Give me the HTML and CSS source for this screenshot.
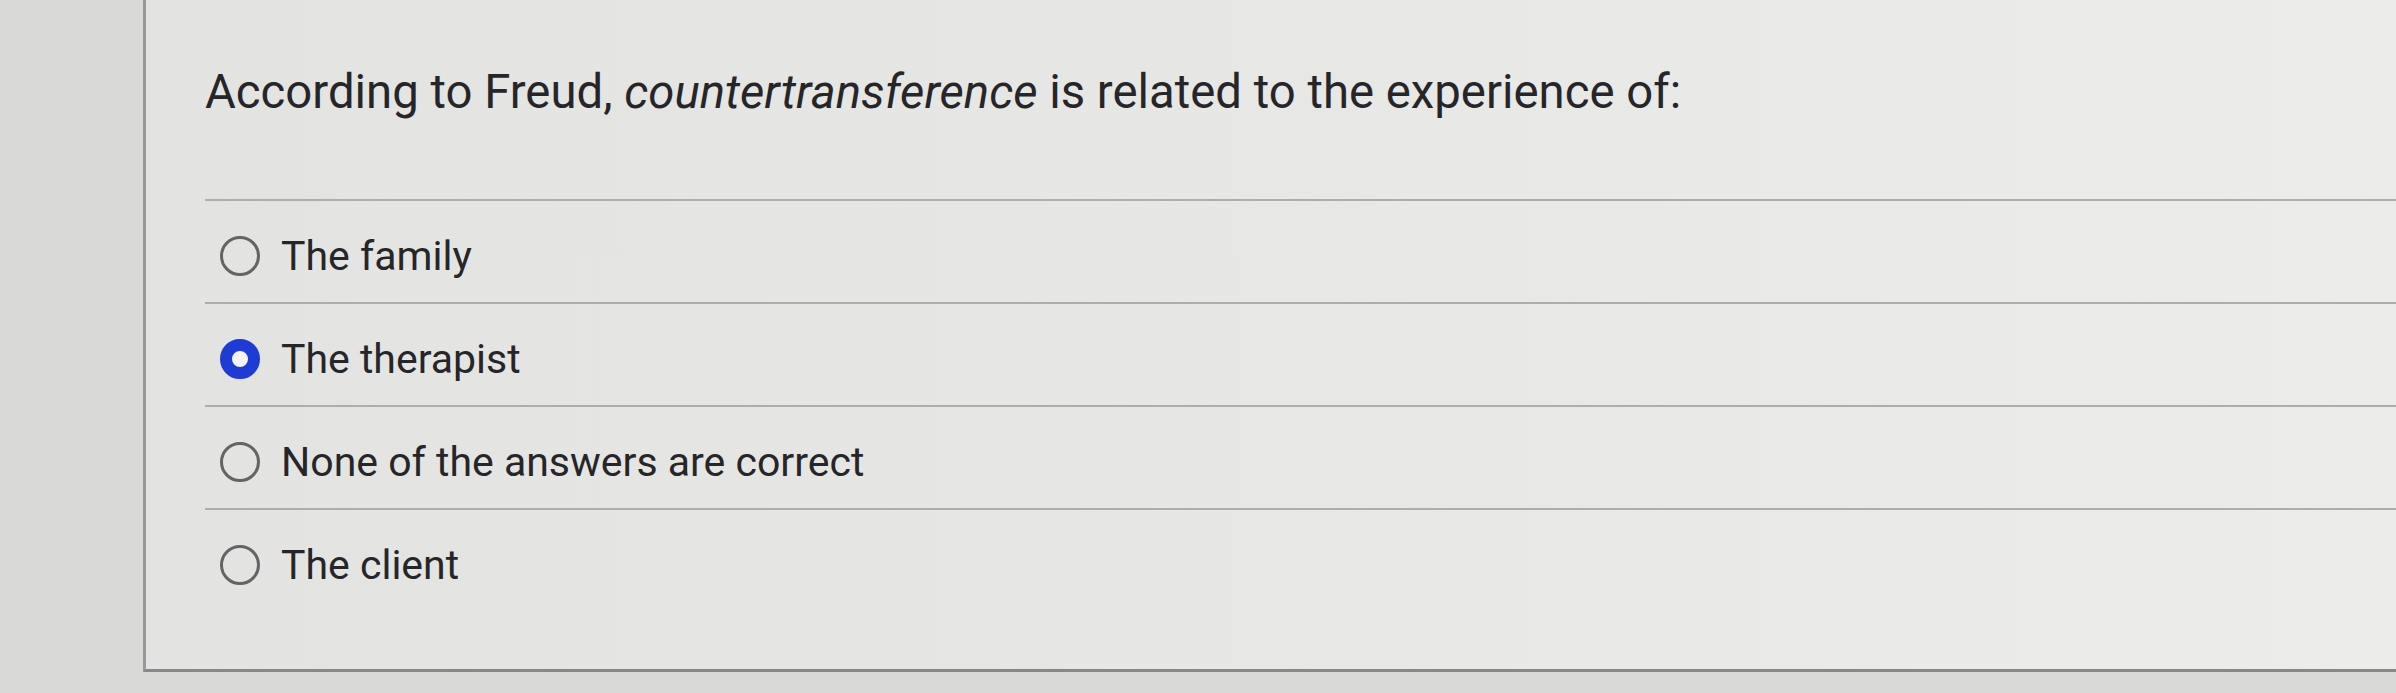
FILE: index.html
```html
<!DOCTYPE html>
<html lang="en">
<head>
<meta charset="utf-8">
<title>Question</title>
<link rel="stylesheet" href="styles.css">
</head>
<body>
  <main class="card">
    <p class="question">According to Freud, <em>countertransference</em> is related to the experience of:</p>
    <ul class="options">
      <li class="option"><span class="radio"></span><span class="label">The family</span></li>
      <li class="option"><span class="radio radio-checked"></span><span class="label">The therapist</span></li>
      <li class="option"><span class="radio"></span><span class="label">None of the answers are correct</span></li>
      <li class="option"><span class="radio"></span><span class="label">The client</span></li>
    </ul>
  </main>
</body>
</html>
```

FILE: styles.css
```css
html, body {
  margin: 0;
  padding: 0;
}
body {
  background: #d9d9d8;
  font-family: Roboto, "Liberation Sans", sans-serif;
  color: #26262a;
  width: 2396px;
  height: 693px;
  overflow: hidden;
}
.card {
  margin-left: 143px;
  height: 672px;
  box-sizing: border-box;
  background: linear-gradient(90deg, #e3e3e1 0%, #e7e7e5 50%, #ececeb 100%);
  border-left: 3px solid #98989b;
  border-bottom: 3px solid #88888b;
  padding: 0 0 0 59px;
}
.question {
  margin: 0;
  padding-top: 62px;
  font-size: 47.3px;
  line-height: 60px;
  height: 199px;
  box-sizing: border-box;
}
.question em {
  font-style: italic;
}
.options {
  list-style: none;
  margin: 0;
  padding: 0;
}
.option {
  display: flex;
  align-items: center;
  height: 103px;
  box-sizing: border-box;
  border-top: 2px solid #adadad;
  padding: 9px 0 0 15px;
  gap: 21px;
  font-size: 41px;
}
.radio {
  width: 40px;
  height: 40px;
  box-sizing: border-box;
  border-radius: 50%;
  border: 3.5px solid #646467;
  flex: none;
}
.radio-checked {
  border: 12px solid #1e3cd4;
  background: #f4f4f6;
}
.label {
  line-height: 48px;
}
```
